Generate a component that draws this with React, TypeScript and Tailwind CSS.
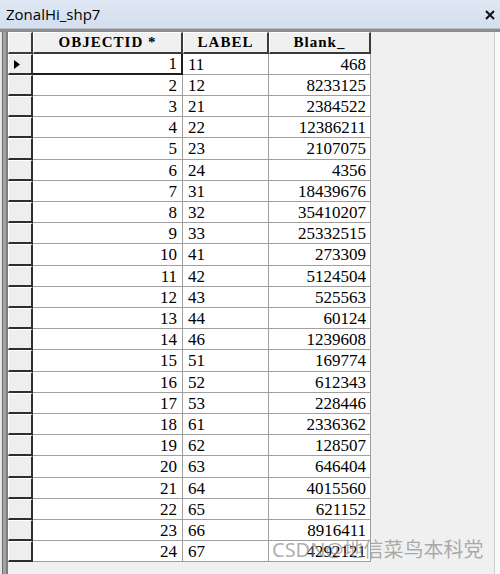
import React from "react";

const rows: [number, string, string][] = [
  [1, "11", "468"],
  [2, "12", "8233125"],
  [3, "21", "2384522"],
  [4, "22", "12386211"],
  [5, "23", "2107075"],
  [6, "24", "4356"],
  [7, "31", "18439676"],
  [8, "32", "35410207"],
  [9, "33", "25332515"],
  [10, "41", "273309"],
  [11, "42", "5124504"],
  [12, "43", "525563"],
  [13, "44", "60124"],
  [14, "46", "1239608"],
  [15, "51", "169774"],
  [16, "52", "612343"],
  [17, "53", "228446"],
  [18, "61", "2336362"],
  [19, "62", "128507"],
  [20, "63", "646404"],
  [21, "64", "4015560"],
  [22, "65", "621152"],
  [23, "66", "8916411"],
  [24, "67", "4292121"],
];

const serif = { fontFamily: '"Liberation Serif", "Times New Roman", serif' };

function rowClass(i: number) {
  const a = Math.floor(54 + i * 21.2);
  const b = Math.floor(54 + (i - 1) * 21.2);
  return a - b >= 22
    ? "grid grid-cols-[25px_150px_86px_102px] h-[22px]"
    : "grid grid-cols-[25px_150px_86px_102px] h-[21px]";
}

export default function App() {
  return (
    <div className="relative w-[500px] h-[574px] bg-[#f0f0f0] overflow-hidden flex flex-col">
      <div className="h-[28px] bg-gradient-to-b from-[#dfe8f4] to-[#d3dfee] flex items-center justify-between pl-[6px] pr-[4px]">
        <span
          className="text-[15px] text-black leading-none"
          style={{ fontFamily: '"Open Sans", "Noto Sans", sans-serif' }}
        >
          ZonalHi_shp7
        </span>
        <svg width="12" height="12" viewBox="0 0 12 12" className="mt-[2px]">
          <path d="M2 2 L10 10 M10 2 L2 10" stroke="#111" strokeWidth="2" />
        </svg>
      </div>
      <div className="h-[1px] bg-[#b8bfc8]" />
      <div className="h-[3px] bg-[#8d8d8d]" />
      <div className="flex-1 flex">
        <div className="flex h-full">
          <div className="w-[2px] bg-[#e6e6e6]" />
          <div className="w-[1px] bg-[#6e6e6e]" />
          <div className="w-[3px] bg-[#a3a3a3]" />
          <div className="w-[2px] bg-[#7d7d7d]" />
        </div>
        <div className="flex flex-col">
          <div className="grid grid-cols-[25px_150px_86px_102px] h-[22px]">
            <div className="bg-[#f0f0f0] border-t border-l border-white border-r-2 border-b-2 border-r-[#3a3a3a] border-b-[#3a3a3a]" />
            {["OBJECTID *", "LABEL", "Blank_"].map((h) => (
              <div
                key={h}
                className="bg-[#f0f0f0] border-t border-l border-white border-r-2 border-b-2 border-r-[#3a3a3a] border-b-[#3a3a3a] flex items-center justify-center text-[15px] font-bold tracking-[1px] text-black whitespace-pre leading-none"
                style={serif}
              >
                {h}
              </div>
            ))}
          </div>
          {rows.map(([id, label, blank]) => (
            <div key={id} className={rowClass(id)}>
              <div className="bg-[#eeeeee] border-t border-l border-white border-r-2 border-b-2 border-r-[#2e2e2e] border-b-[#2e2e2e] flex items-center pl-[5px]">
                {id === 1 && (
                  <svg width="6" height="9" viewBox="0 0 6 9">
                    <path d="M0 0 L6 4.5 L0 9 Z" fill="#000" />
                  </svg>
                )}
              </div>
              <div
                className={
                  id === 1
                    ? "bg-white border-r-2 border-b-2 border-[#1e1e1e] flex items-center justify-end pr-[4px] text-[17px] leading-none text-black"
                    : "bg-white border-r border-b border-[#a0a0a0] flex items-center justify-end pr-[5px] text-[17px] leading-none text-black"
                }
                style={serif}
              >
                {id}
              </div>
              <div
                className="bg-white border-r border-b border-[#a0a0a0] flex items-center pl-[5px] text-[17px] leading-none text-black"
                style={serif}
              >
                {label}
              </div>
              <div
                className="bg-white border-r border-b border-[#a0a0a0] flex items-center justify-end pr-[4px] text-[17px] leading-none text-black"
                style={serif}
              >
                {blank}
              </div>
            </div>
          ))}
        </div>
        <div className="flex-1 bg-[#f0f0f0]" />
        <div className="flex h-full">
          <div className="w-[1px] bg-[#d0d0d0]" />
          <div className="w-[5px] bg-[#fafafa]" />
        </div>
      </div>
      <div
        className="absolute left-[272px] top-[540px] text-[20px] leading-none text-[#8a8a8a]/70 whitespace-nowrap"
        style={{ fontFamily: '"Noto Sans", "Noto Sans CJK SC", sans-serif' }}
      >
        CSDN@地信菜鸟本科党
      </div>
    </div>
  );
}
